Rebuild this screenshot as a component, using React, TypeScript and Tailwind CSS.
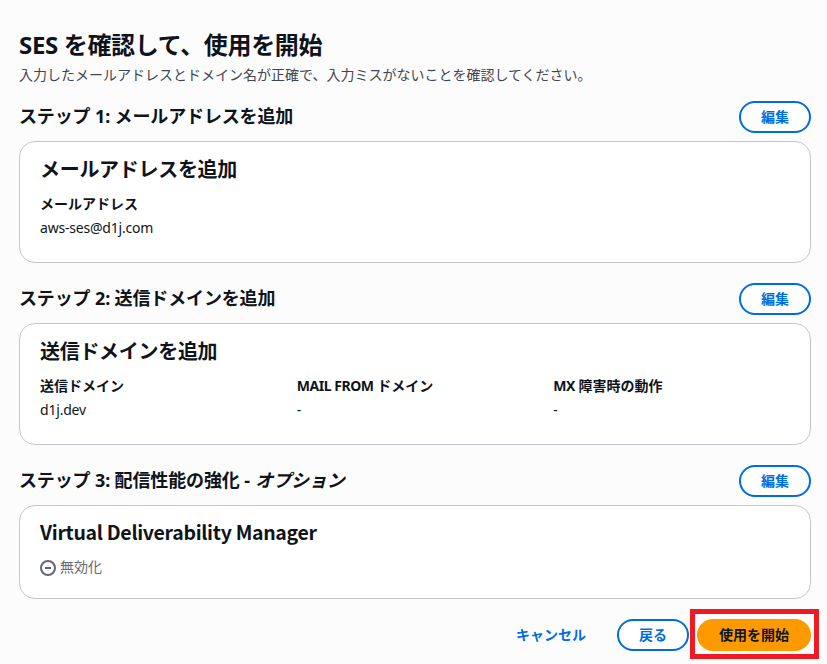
import type { ReactNode } from "react"

function Button({ children }: { children: ReactNode }) {
  return (
    <button className="h-8 w-[72px] rounded-full border-2 border-[#006ce0] bg-white text-sm leading-5 font-bold text-[#006ce0]">
      {children}
    </button>
  )
}

function Step({ title, children }: { title: ReactNode; children: ReactNode }) {
  return (
    <section>
      <div className="flex h-8 items-center justify-between">
        <h2 className="pb-0.5 text-[18px] leading-[22px] font-bold tracking-[-0.14px]">{title}</h2>
        <Button>編集</Button>
      </div>
      {children}
    </section>
  )
}

function Card({ title, className, children }: { title: ReactNode; className: string; children: ReactNode }) {
  return (
    <div className={`mt-2 rounded-2xl border border-[#c6c6cd] bg-white px-5 pt-4 ${className}`}>
      <h3 className="h-6 text-[20px] leading-6 font-bold tracking-[-0.3px]">{title}</h3>
      {children}
    </div>
  )
}

function Field({ label, value }: { label: ReactNode; value: string }) {
  return (
    <div className="text-sm">
      <div className="leading-5 font-bold">{label}</div>
      <div className="mt-1 leading-5 tracking-[-0.2px]">{value}</div>
    </div>
  )
}

export default function App() {
  return (
    <main className="h-[664px] overflow-hidden bg-[#fcfcfd] pr-4 pl-[19px] pt-[30px] font-['Noto_Sans','Noto_Sans_CJK_JP',sans-serif] text-[#0f141a]">
      <h1 className="text-2xl leading-[30px] font-bold tracking-[-0.34px]">SES を確認して、使用を開始</h1>
      <p className="mt-[5px] text-sm leading-5 text-[#424650]">
        入力したメールアドレスとドメイン名が正確で、入力ミスがないことを確認してください。
      </p>

      <div className="mt-4 flex flex-col gap-5">
        <Step title="ステップ 1: メールアドレスを追加">
          <Card title="メールアドレスを追加" className="h-[122px]">
            <div className="mt-3">
              <Field label="メールアドレス" value="aws-ses@d1j.com" />
            </div>
          </Card>
        </Step>

        <Step title="ステップ 2: 送信ドメインを追加">
          <Card title="送信ドメインを追加" className="h-[122px]">
            <div className="mt-3 grid grid-cols-3 gap-5">
              <Field label="送信ドメイン" value="d1j.dev" />
              <Field label={<><span className="tracking-[-0.45px]">MAIL FROM</span> ドメイン</>} value="-" />
              <Field label={<><span className="tracking-[-0.5px]">MX</span> 障害時の動作</>} value="-" />
            </div>
          </Card>
        </Step>

        <Step title={<>ステップ 3: 配信性能の強化 - <i className="ml-px">オプション</i></>}>
          <Card
            title={
              <span className="block font-['Noto_Sans_CJK_JP',sans-serif] text-[19.5px] leading-5 tracking-[-0.31px]">
                Virtual Deliverability Manager
              </span>
            }
            className="h-[94px]"
          >
            <div className="mt-[13px] flex items-center gap-1 text-sm leading-5 text-[#656871]">
              <svg className="size-4" viewBox="0 0 16 16" fill="none" stroke="currentColor" strokeWidth="2">
                <circle cx="8" cy="8" r="7" />
                <path d="M5 8h6" />
              </svg>
              <span className="-mt-0.5">無効化</span>
            </div>
          </Card>
        </Step>
      </div>

      <div className="mt-5 flex items-center justify-end">
        <button className="mr-[31px] text-sm leading-5 font-bold text-[#006ce0]">キャンセル</button>
        <Button>戻る</Button>
        <div className="relative ml-2">
          <button className="h-8 w-[114px] rounded-full bg-[#ff9900] text-sm leading-5 font-bold">使用を開始</button>
          <div className="absolute -top-[10px] -left-[7px] h-[50px] w-[129px] border-5 border-[#ed1c24]" />
        </div>
      </div>
    </main>
  )
}
